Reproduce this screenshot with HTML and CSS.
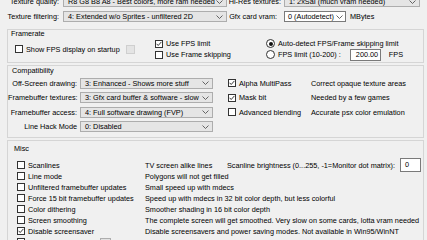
FILE: index.html
```html
<!DOCTYPE html>
<html lang="en">
<head>
    <meta charset="UTF-8">
    <title>Configuration</title>
    <link rel="stylesheet" href="styles.css">
</head>
<body>
    <div class="dlg">
        <div class="top">
            <div class="trow">
                <span class="tlbl">Texture quality:</span>
                <div class="combo c-tex">R8 G8 B8 A8 - Best colors, more ram needed<svg class="chev" width="7" height="4" viewBox="0 0 7 4"><polyline points="0.5,0.5 3.5,3.5 6.5,0.5"/></svg></div>
                <span class="tlbl tlbl-r">Hi-Res textures:</span>
                <div class="combo c-hires">1: 2xSaI (much vram needed)<svg class="chev" width="7" height="4" viewBox="0 0 7 4"><polyline points="0.5,0.5 3.5,3.5 6.5,0.5"/></svg></div>
            </div>
            <div class="trow">
                <span class="tlbl">Texture filtering:</span>
                <div class="combo c-tex">4: Extended w/o Sprites - unfiltered 2D<svg class="chev" width="7" height="4" viewBox="0 0 7 4"><polyline points="0.5,0.5 3.5,3.5 6.5,0.5"/></svg></div>
                <span class="tlbl tlbl-r tlbl-vram">Gfx card vram:</span>
                <div class="combo edit-combo c-vram">0 (Autodetect)<svg class="chev" width="7" height="4" viewBox="0 0 7 4"><polyline points="0.5,0.5 3.5,3.5 6.5,0.5"/></svg></div>
                <span class="unit">MBytes</span>
            </div>
        </div>

        <!-- Framerate -->
        <div class="group g-frame">
            <div class="legend">Framerate</div>
            <div class="frame-body">
                <div class="fcol fcol-a">
                    <div class="opt"><span class="cb"></span>Show FPS display on startup</div>
                    <span class="tinybtn"></span>
                </div>
                <div class="fcol fcol-b">
                    <div class="opt"><span class="cb"><svg width="6" height="6" viewBox="0 0 6 6"><polyline points="0.6,2.8 2.2,4.5 5.4,0.9"/></svg></span>Use FPS limit</div>
                    <div class="opt"><span class="cb"></span>Use Frame skipping</div>
                </div>
                <div class="fcol fcol-c">
                    <div class="opt"><span class="rb on"></span>Auto-detect FPS/Frame skipping limit</div>
                    <div class="opt"><span class="rb"></span>FPS limit (10-200) :<span class="edit e-fps">200.00</span><span class="unit-fps">FPS</span></div>
                </div>
            </div>
        </div>

        <!-- Compatibility -->
        <div class="group g-compat">
            <div class="legend">Compatibility</div>
            <div class="compat-grid">
                <span class="clbl">Off-Screen drawing:</span>
                <div class="combo c-compat">3: Enhanced - Shows more stuff<svg class="chev" width="7" height="4" viewBox="0 0 7 4"><polyline points="0.5,0.5 3.5,3.5 6.5,0.5"/></svg></div>
                <div class="opt"><span class="cb"><svg width="6" height="6" viewBox="0 0 6 6"><polyline points="0.6,2.8 2.2,4.5 5.4,0.9"/></svg></span>Alpha MultiPass</div>
                <span class="desc">Correct opaque texture areas</span>

                <span class="clbl">Framebuffer textures:</span>
                <div class="combo c-compat">3: Gfx card buffer &amp; software - slow<svg class="chev" width="7" height="4" viewBox="0 0 7 4"><polyline points="0.5,0.5 3.5,3.5 6.5,0.5"/></svg></div>
                <div class="opt"><span class="cb"><svg width="6" height="6" viewBox="0 0 6 6"><polyline points="0.6,2.8 2.2,4.5 5.4,0.9"/></svg></span>Mask bit</div>
                <span class="desc">Needed by a few games</span>

                <span class="clbl">Framebuffer access:</span>
                <div class="combo c-compat">4: Full software drawing (FVP)<svg class="chev" width="7" height="4" viewBox="0 0 7 4"><polyline points="0.5,0.5 3.5,3.5 6.5,0.5"/></svg></div>
                <div class="opt"><span class="cb"></span>Advanced blending</div>
                <span class="desc">Accurate psx color emulation</span>

                <span class="clbl">Line Hack Mode</span>
                <div class="combo c-compat">0: Disabled<svg class="chev" width="7" height="4" viewBox="0 0 7 4"><polyline points="0.5,0.5 3.5,3.5 6.5,0.5"/></svg></div>
                <span></span>
                <span></span>
            </div>
        </div>

        <!-- Misc -->
        <div class="group g-misc">
            <div class="legend">Misc</div>
            <div class="misc-list">
                <div class="mrow">
                    <div class="opt"><span class="cb"></span>Scanlines</div>
                    <span class="desc">TV screen alike lines</span>
                    <span class="mextra">Scanline brightness (0...255, -1=Monitor dot matrix):<span class="edit e-scan">0</span></span>
                </div>
                <div class="mrow">
                    <div class="opt"><span class="cb"></span>Line mode</div>
                    <span class="desc">Polygons will not get filled</span>
                </div>
                <div class="mrow">
                    <div class="opt"><span class="cb"></span>Unfiltered framebuffer updates</div>
                    <span class="desc">Small speed up with mdecs</span>
                </div>
                <div class="mrow">
                    <div class="opt"><span class="cb"></span>Force 15 bit framebuffer updates</div>
                    <span class="desc">Speed up with mdecs in 32 bit color depth, but less colorful</span>
                </div>
                <div class="mrow">
                    <div class="opt"><span class="cb"></span>Color dithering</div>
                    <span class="desc">Smoother shading in 16 bit color depth</span>
                </div>
                <div class="mrow">
                    <div class="opt"><span class="cb"></span>Screen smoothing</div>
                    <span class="desc">The complete screen will get smoothed. Very slow on some cards, lotta vram needed</span>
                </div>
                <div class="mrow">
                    <div class="opt"><span class="cb"><svg width="6" height="6" viewBox="0 0 6 6"><polyline points="0.6,2.8 2.2,4.5 5.4,0.9"/></svg></span>Disable screensaver</div>
                    <span class="desc">Disable screensavers and power saving modes. Not available in Win95/WinNT</span>
                </div>
                <div class="mrow">
                    <div class="opt"><span class="cb"></span>Special game fixes<span class="dotbtn">...</span></div>
                    <span class="desc"></span>
                </div>
            </div>
        </div>
    </div>
</body>
</html>
```

FILE: styles.css
```css
/* Win32 dialog look */
:root {
    --bg-color: #f0f0f0;
    --text-color: #000000;
    --group-line: #d5d5d5;
    --combo-bg: #e5e5e5;
    --combo-border: #adadad;
    --edit-border: #7a7a7a;
    --box-border: #333333;
}

body {
    margin: 0;
    background-color: var(--bg-color);
    color: var(--text-color);
    font-family: 'Liberation Sans', Arial, sans-serif;
    font-size: 7.3px;
    line-height: 11px;
    overflow: hidden;
}

.dlg {
    width: 427px;
}

/* top combo rows */
.top {
    display: flex;
    flex-direction: column;
    gap: 4px;
    margin-top: -4px;
}

.trow {
    display: flex;
    align-items: center;
    height: 11px;
    white-space: nowrap;
}

.tlbl {
    width: 59px;
    text-align: right;
}

.tlbl-r {
    box-sizing: border-box;
    width: 54px;
}

.tlbl-vram {
    padding-right: 4px;
}

.combo {
    box-sizing: border-box;
    display: flex;
    align-items: center;
    height: 11px;
    padding: 0 3px 0 4px;
    line-height: 9px;
    background-color: var(--combo-bg);
    border: 1px solid var(--combo-border);
    white-space: nowrap;
    overflow: hidden;
}

.edit-combo {
    background-color: #fff;
    border-color: var(--edit-border);
    padding-left: 3px;
    padding-right: 2px;
}

.chev {
    flex: none;
    margin-left: auto;
}

.chev polyline {
    fill: none;
    stroke: #555;
    stroke-width: 0.9;
}

.c-tex {
    width: 164px;
    margin-left: 4px;
}

.c-hires {
    width: 136px;
    margin-left: 3px;
}

.c-vram {
    width: 62px;
    margin-left: 3px;
}

.unit {
    margin-left: 4px;
}

/* group boxes */
.group {
    box-sizing: border-box;
    width: 417px;
    margin-left: 7px;
    border: 1px solid var(--group-line);
}

.legend {
    height: 8px;
    line-height: 8px;
    padding-left: 3px;
}

.g-frame {
    margin-top: 7px;
    padding-bottom: 2px;
}

.g-compat {
    margin-top: 2px;
    padding-bottom: 3px;
}

.g-compat .legend {
    height: 9px;
    line-height: 9px;
    padding-left: 4px;
}

.g-misc {
    margin-top: 2px;
    padding-top: 3px;
}

.g-misc .legend {
    height: 9px;
    line-height: 9px;
    padding-left: 6px;
}

/* checkbox / radio */
.opt {
    display: flex;
    align-items: center;
    gap: 3px;
    height: 11px;
    white-space: nowrap;
}

.cb {
    box-sizing: border-box;
    flex: none;
    display: flex;
    align-items: center;
    justify-content: center;
    width: 8px;
    height: 8px;
    background-color: #fff;
    border: 1px solid var(--box-border);
}

.cb polyline {
    fill: none;
    stroke: #222;
    stroke-width: 0.9;
}

.rb {
    box-sizing: border-box;
    flex: none;
    display: flex;
    align-items: center;
    justify-content: center;
    width: 9px;
    height: 9px;
    background-color: #fff;
    border: 1px solid var(--box-border);
    border-radius: 50%;
}

.rb.on::after {
    content: "";
    width: 4px;
    height: 4px;
    border-radius: 50%;
    background-color: #111;
}

.edit {
    box-sizing: border-box;
    display: inline-block;
    background-color: #fff;
    border: 1px solid var(--edit-border);
    line-height: 10px;
}

/* framerate */
.frame-body {
    display: flex;
    padding-left: 7px;
}

.fcol {
    display: flex;
    flex-direction: column;
    justify-content: center;
    height: 22px;
}

.fcol-a {
    flex-direction: row;
    justify-content: flex-start;
    align-items: center;
    width: 140px;
}

.fcol-b {
    width: 111px;
}

.tinybtn {
    box-sizing: border-box;
    width: 9px;
    height: 9px;
    margin-left: 6px;
    background-color: #e4e4e4;
    border: 1px solid #cfcfcf;
}

.e-fps {
    width: 31px;
    height: 12px;
    margin-left: 6px;
    padding-left: 5px;
}

.unit-fps {
    margin-left: 5px;
}

/* compatibility */
.compat-grid {
    display: grid;
    grid-template-columns: 69px 136px 98px auto;
    grid-auto-rows: 14.5px;
    align-items: center;
    padding-top: 0.75px;
    white-space: nowrap;
}

.clbl {
    text-align: right;
}

.c-compat {
    margin-left: 3px;
}

.compat-grid .opt {
    padding-left: 15px;
}

/* misc */
.misc-list {
    margin-top: 7px;
    padding-left: 9px;
    padding-right: 2px;
}

.mrow {
    display: flex;
    align-items: center;
    height: 11px;
    white-space: nowrap;
}

.mrow .opt {
    width: 128px;
}

.mextra {
    display: flex;
    align-items: center;
    margin-left: auto;
}

.e-scan {
    width: 21px;
    height: 14px;
    margin: -2px 0 -2px 5px;
    padding-left: 4px;
    line-height: 12px;
}

.dotbtn {
    box-sizing: border-box;
    width: 11px;
    height: 9px;
    margin-left: 8px;
    line-height: 7px;
    text-align: center;
    background-color: #e1e1e1;
    border: 1px solid #adadad;
}
```
